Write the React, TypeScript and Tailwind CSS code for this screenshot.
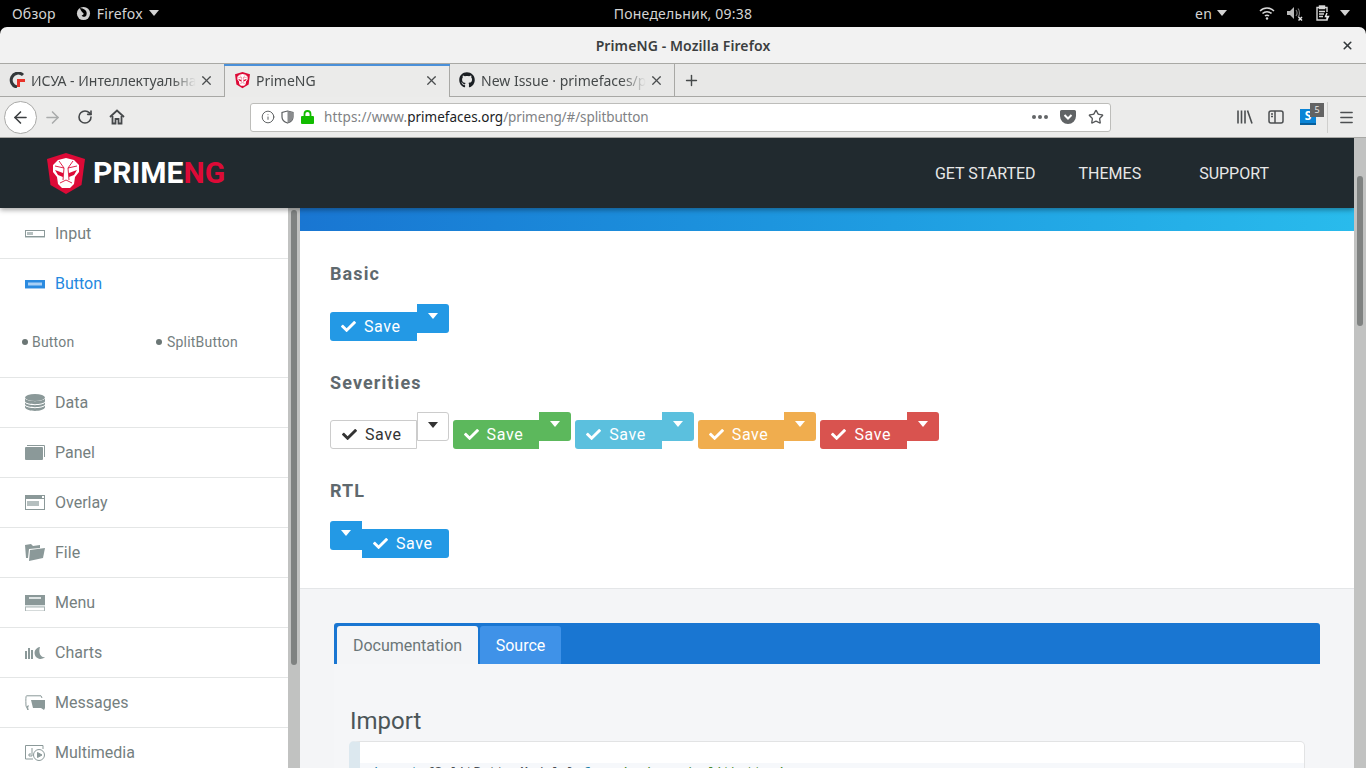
import React from "react"
import { ArrowLeft, ArrowRight, RotateCw, Info, Star, Menu, X, Plus } from "lucide-react"
import { FaCheck, FaGithub } from "react-icons/fa"

const uiFont = "font-['Noto_Sans',sans-serif]"

function Caret({ className }: { className: string }) {
  return (
    <svg width="10" height="6" viewBox="0 0 10 6" className={className}>
      <polygon points="0,0 10,0 5,6" fill="currentColor" />
    </svg>
  )
}

function PrimeShield({ size }: { size: number }) {
  return (
    <svg width={size} height={size * 41 / 38} viewBox="0 0 38 41">
      <polygon points="19,0 38,6 34.5,32 19,41 3.5,32 0,6" fill="#dd0a37" />
      <polygon points="11,7 19,5 27,7 32,12 32,19 28,24 27,31 23,35 15,35 11,31 10,24 6,19 6,12" fill="#fff" />
      <polygon points="8,17 16,20 16,24 11,22" fill="#dd0a37" />
      <polygon points="30,17 22,20 22,24 27,22" fill="#dd0a37" />
      <path d="M12 8 L17 15 L8 13 M26 8 L21 15 L30 13 M17 15 L16 27 M21 15 L22 27 M13 30 L19 27 L25 30" stroke="#dd0a37" strokeWidth="0.9" fill="none" />
    </svg>
  )
}

function TopBar() {
  return (
    <div className={`h-[27px] pb-[1px] flex items-center text-[14px] tracking-[0.2px] text-[#d4d4d4] ${uiFont}`}>
      <div className="flex-1 flex items-center pl-[12px]">
        <span>Обзор</span>
        <svg width="15" height="15" viewBox="0 0 16 16" className="ml-[20px]">
          <circle cx="8" cy="8" r="7" fill="#d0d0d0" />
          <path d="M4 2 C8 2 13 5 11 10 C10 12 7 12 6 10 C8 10 9 8 7 7 C6 6 5 4 4 2Z" fill="#000" />
        </svg>
        <span className="ml-[6px]">Firefox</span>
        <Caret className="ml-[6px] text-[#d4d4d4]" />
      </div>
      <span className="ml-[4px]">Понедельник, 09:38</span>
      <div className="flex-1 flex items-center justify-end pr-[16px]">
        <span>en</span>
        <Caret className="ml-[5px] text-[#d4d4d4]" />
        <svg width="16" height="14" viewBox="0 0 16 14" className="ml-[32px]" fill="none" stroke="#d8d8d8" strokeWidth="1.5">
          <path d="M1 5 C5 1 11 1 15 5" />
          <path d="M3.5 7.5 C6 5 10 5 12.5 7.5" />
          <path d="M6 10 C7 9 9 9 10 10" />
          <circle cx="8" cy="12.5" r="1.2" fill="#d8d8d8" stroke="none" />
        </svg>
        <svg width="16" height="15" viewBox="0 0 16 15" className="ml-[12px]">
          <polygon points="0,5 3,5 7,1 7,13 3,9 0,9" fill="#b8b8b8" />
          <path d="M9 4 C10.5 6 10.5 8 9 10 M11 2.5 C13 5 13 9 11 11" stroke="#777" strokeWidth="1.2" fill="none" />
          <path d="M11.5 11 L15 14.5 M15 11 L11.5 14.5" stroke="#e0e0e0" strokeWidth="1.5" />
        </svg>
        <svg width="15" height="16" viewBox="0 0 15 16" className="ml-[13px]" fill="none" stroke="#d8d8d8" strokeWidth="1.4">
          <path d="M3 2.5 H1 V15 H11 V12 M9 2.5 H11 V7" />
          <rect x="3.5" y="1" width="5" height="2.5" fill="#d8d8d8" />
          <path d="M3 6.5 H9 M3 9 H8 M3 11.5 H7" />
          <path d="M11 8 L9.5 11.5 H12.5 L11 14.5" stroke="#e8e8e8" />
        </svg>
        <Caret className="ml-[9px] text-[#d4d4d4]" />
      </div>
    </div>
  )
}

function TitleBar() {
  return (
    <div className={`h-[37px] bg-[#f2f2f2] rounded-t-[7px] border-b border-[#a9a9a5] flex items-center justify-center relative ${uiFont}`}>
      <span className="text-[14px] font-semibold tracking-[0.1px] text-[#3b3e3f]">PrimeNG - Mozilla Firefox</span>
      <X size={13} strokeWidth={3} className="absolute right-[12px] top-[12px] text-[#33393b]" />
    </div>
  )
}

function Tab({ icon, title, selected, width }: { icon: React.ReactNode; title: string; selected?: boolean; width: string }) {
  return (
    <div className={`${width} h-[33px] flex items-center pl-[9px] pr-[10px] border-r border-[#a8a8a5] relative ${selected ? "bg-[#ebebea]" : "border-b"}`}>
      {selected && <div className="absolute -left-px -right-px top-0 h-[2px] bg-[#4a90d9]" />}
      <div className="w-[16px] h-[16px] shrink-0 flex items-center justify-center">{icon}</div>
      <span className="ml-[6px] flex-1 overflow-hidden whitespace-nowrap text-[14px] text-[#45494a] [mask-image:linear-gradient(to_right,black_85%,transparent)]">{title}</span>
      <X size={15} strokeWidth={2} className="ml-[3px] shrink-0 text-[#4a4d4e]" />
    </div>
  )
}

function TabBar() {
  return (
    <div className={`h-[33px] bg-[#e8e8e7] flex items-start ${uiFont}`}>
      <Tab
        width="w-[225px]"
        title="ИСУА - Интеллектуальная"
        icon={
          <svg width="16" height="16" viewBox="0 0 16 16">
            <path d="M14 3 A7 7 0 1 0 8 15" stroke="#33383a" strokeWidth="3" fill="none" />
            <path d="M8 7 H16 V10 H11 V15 H8Z" fill="#e8332a" />
          </svg>
        }
      />
      <Tab width="w-[225px]" selected title="PrimeNG" icon={<PrimeShield size={15} />} />
      <Tab width="w-[225px]" title="New Issue · primefaces/primeng" icon={<FaGithub size={16} className="text-[#1b1f23]" />} />
      <div className="h-[24px] mt-[4px] border-l border-[#a8a8a5] -ml-px" />
      <div className="flex-1 h-[33px] border-b border-[#a8a8a5] pl-[8px] pt-[8px]">
        <Plus size={17} strokeWidth={2} className="text-[#45494a]" />
      </div>
    </div>
  )
}

function NavBar() {
  return (
    <div className={`h-[41px] bg-[#ececeb] border-b border-[#a8a8a5] flex items-center pl-[4px] ${uiFont}`}>
      <div className="w-[33px] h-[33px] rounded-full bg-white border border-[#a9a9a7] flex items-center justify-center">
        <ArrowLeft size={19} strokeWidth={2} className="text-[#3c3f41] -ml-[1px]" />
      </div>
      <ArrowRight size={19} strokeWidth={2} className="ml-[6px] text-[#a9abab]" />
      <RotateCw size={16} strokeWidth={2.4} className="ml-[15px] text-[#45484a]" />
      <svg width="16" height="16" viewBox="0 0 16 16" className="ml-[16px]" fill="none" stroke="#45484a" strokeWidth="1.8">
        <path d="M1 8 L8 1.5 L15 8" />
        <path d="M3.5 7 V14.5 H6.5 V10 H9.5 V14.5 H12.5 V7" />
      </svg>
      <div className="ml-[125px] w-[861px] h-[29px] bg-white border border-[#bdbdba] rounded-[3px] flex items-center pl-[10px] pr-[6px]">
        <Info size={14} strokeWidth={1.6} className="text-[#55585a]" />
        <svg width="13" height="14" viewBox="0 0 13 14" className="ml-[6px]">
          <path d="M6.5 1 L12 2.5 V7 C12 10 9.5 12 6.5 13 C3.5 12 1 10 1 7 V2.5Z" fill="none" stroke="#5c5f61" strokeWidth="1.2" />
          <path d="M6.5 1 L12 2.5 V7 C12 10 9.5 12 6.5 13Z" fill="#8a8c8e" />
        </svg>
        <svg width="13" height="14" viewBox="0 0 13 14" className="ml-[7px]">
          <path d="M3.5 6 V4 A3 3 0 0 1 9.5 4 V6" fill="none" stroke="#12bc00" strokeWidth="1.8" />
          <rect y="6" width="13" height="8" rx="1" fill="#12bc00" />
        </svg>
        <div className="ml-[10px] flex-1 text-[13.5px] whitespace-nowrap text-[#808285]">
          <span className="tracking-[0.15px]">https://www.</span>
          <span className="text-[#1c1d1f]">primefaces.org</span>
          <span className="tracking-[-0.1px]">/primeng/#/splitbutton</span>
        </div>
        <div className="flex gap-[2px]">
          <div className="w-[4px] h-[4px] rounded-full bg-[#636567]" />
          <div className="w-[4px] h-[4px] rounded-full bg-[#636567]" />
          <div className="w-[4px] h-[4px] rounded-full bg-[#636567]" />
        </div>
        <svg width="16" height="14" viewBox="0 0 16 14" className="ml-[12px]">
          <path d="M1.5 0 H14.5 A1.5 1.5 0 0 1 16 1.5 V6 A8 8 0 0 1 0 6 V1.5 A1.5 1.5 0 0 1 1.5 0Z" fill="#606365" />
          <path d="M4.5 5 L8 8.5 L11.5 5" stroke="#fff" strokeWidth="2" fill="none" />
        </svg>
        <Star size={16} strokeWidth={2} className="ml-[12px] text-[#555759]" />
      </div>
      <div className="flex-1 flex items-center pl-[126px]">
        <svg width="16" height="14" viewBox="0 0 16 14" stroke="#4c4f51" strokeWidth="1.6" fill="none">
          <path d="M1 0.5 V13.5 M4.5 0.5 V13.5 M8 0.5 V13.5 M10.5 0.5 L15 13.5" />
        </svg>
        <svg width="16" height="14" viewBox="0 0 16 14" className="ml-[15px]" stroke="#4c4f51" strokeWidth="1.5" fill="none">
          <rect x="1" y="1" width="14" height="12" rx="2" />
          <path d="M7 1 V13 M3 4 H5 M3 6.5 H5" />
        </svg>
        <div className="ml-[16px] relative w-[16px] h-[16px] bg-[#0a84d6] flex items-center justify-center border-b-2 border-[#075f9c]">
          <span className="text-white text-[12px] font-bold leading-none">S</span>
          <span className="absolute left-[10px] -top-[6px] w-[14px] h-[14px] bg-[#636363] text-[#e8e8e8] text-[9px] leading-[14px] text-center">5</span>
        </div>
        <div className="ml-[11px] h-[31px] border-l border-[#cfcfcd]" />
        <Menu size={17} strokeWidth={2} className="ml-[10px] text-[#4c4f51]" />
      </div>
    </div>
  )
}

const iconFill = "#8b9999"

const sideIcons: Record<string, React.ReactNode> = {
  Input: (
    <svg width="20" height="8" viewBox="0 0 20 8">
      <rect x="0.5" y="0.5" width="19" height="6" fill="#fff" stroke={iconFill} />
      <rect x="2" y="2" width="6" height="3" fill="#b5bfbf" />
      <rect y="7" width="20" height="1" fill="#c9d2d2" />
    </svg>
  ),
  Button: (
    <svg width="20" height="9" viewBox="0 0 20 9">
      <rect width="20" height="8" fill="#2b8be0" />
      <rect x="3" y="2.5" width="14" height="3" fill="#a9d0f5" />
      <rect y="8" width="20" height="1" fill="#9fc8ef" />
    </svg>
  ),
  Data: (
    <svg width="20" height="17" viewBox="0 0 20 17" fill={iconFill}>
      <ellipse cx="10" cy="3.5" rx="10" ry="3.5" />
      <path d="M0 4.5 C2 8 18 8 20 4.5 V7.5 C18 11 2 11 0 7.5Z" />
      <path d="M0 8.5 C2 12 18 12 20 8.5 V10.5 C18 14 2 14 0 10.5Z" />
      <path d="M0 11.5 C2 15 18 15 20 11.5 V13.5 C18 18 2 18 0 13.5Z" />
    </svg>
  ),
  Panel: (
    <svg width="20" height="15" viewBox="0 0 20 15">
      <path d="M2 0.5 H19.5 V12" fill="none" stroke={iconFill} />
      <rect y="2" width="18" height="13" rx="1" fill={iconFill} />
    </svg>
  ),
  Overlay: (
    <svg width="20" height="15" viewBox="0 0 20 15">
      <rect width="20" height="15" fill={iconFill} />
      <rect x="1" y="4" width="18" height="10" fill="#fff" />
      <rect x="2" y="6" width="12" height="5" fill="#b5bfbf" />
      <rect x="17" y="1" width="2" height="2" fill="#fff" />
    </svg>
  ),
  File: (
    <svg width="20" height="17" viewBox="0 0 20 17" fill={iconFill}>
      <path d="M0 1 L6 0 L8 2 L15 1 L15 4 L4 5 L3 14 L1 14Z" />
      <path d="M5 6 L20 4 L18 14 L4 17Z" />
    </svg>
  ),
  Menu: (
    <svg width="20" height="16" viewBox="0 0 20 16">
      <rect width="20" height="10" fill={iconFill} />
      <rect x="4" y="2" width="12" height="2" fill="#dfe5e5" />
      <rect y="10" width="20" height="2" fill="#dfe5e5" />
      <rect x="0.5" y="12" width="19" height="4" fill="#fff" stroke="#aab5b5" />
    </svg>
  ),
  Charts: (
    <svg width="20" height="12" viewBox="0 0 20 12" fill={iconFill}>
      <rect y="4" width="2" height="8" />
      <rect x="3" y="1" width="2" height="11" />
      <rect x="6" y="3" width="2" height="9" />
      <path d="M15 0 A6 6 0 1 0 20 10 C16 11 13 6 15 0Z" />
    </svg>
  ),
  Messages: (
    <svg width="21" height="16" viewBox="0 0 21 16">
      <path d="M4 11 H2.5 L3 15 L1 11 Q0.5 1 1.5 0.8 H16 L17 3" fill="none" stroke={iconFill} />
      <path d="M6 5 H20 V13 L19 15 L16 13 H8 Z" fill={iconFill} />
    </svg>
  ),
  Multimedia: (
    <svg width="20" height="16" viewBox="0 0 20 16" fill="none" stroke={iconFill}>
      <path d="M18 4 V0.5 H0.5 V14 H8" />
      <path d="M7 3 V11 H4 V9 H6" />
      <circle cx="14" cy="10" r="5.5" fill="#fff" />
      <polygon points="12.5,7.5 17,10 12.5,12.5" fill={iconFill} />
    </svg>
  ),
}

function SideRow({ name, active }: { name: string; active?: boolean }) {
  return (
    <div className={`h-[50px] pl-[25px] flex items-center ${active ? "" : "border-b border-[#e4e6e6]"}`}>
      <div className="w-[30px] flex items-center">{sideIcons[name]}</div>
      <span className={`text-[16px] ${active ? "text-[#2388e0]" : "text-[#75807f]"}`}>{name}</span>
    </div>
  )
}

function Sidebar() {
  return (
    <div className="w-[300px] flex shrink-0">
      <div className="w-[288px] pt-[1px] bg-white font-['Roboto',sans-serif]">
        <SideRow name="Input" />
        <SideRow name="Button" active />
        <div className="h-[69px] border-b border-[#e4e6e6] pl-[22px] pt-[24px] flex text-[14px] tracking-[0.2px] text-[#75807f]">
          <div className="w-[134px] flex items-center h-[18px]">
            <div className="w-[6px] h-[6px] rounded-full bg-[#6b7675] mr-[4px]" />
            Button
          </div>
          <div className="flex items-center h-[18px]">
            <div className="w-[6px] h-[6px] rounded-full bg-[#6b7675] mr-[5px]" />
            SplitButton
          </div>
        </div>
        {["Data", "Panel", "Overlay", "File", "Menu", "Charts", "Messages", "Multimedia"].map((n) => (
          <SideRow key={n} name={n} />
        ))}
      </div>
      <div className="w-[12px] bg-[#c1c2c1] pt-[2px] px-[3px]">
        <div className="h-[455px] bg-[#7f8281] rounded-[3px]" />
      </div>
    </div>
  )
}

function SplitButton({ tone, border, rtl }: { tone: string; border?: boolean; rtl?: boolean }) {
  const edge = border ? "border border-[#cccccc]" : ""
  const label = (
    <div className={`h-[29px] mt-[8px] w-[86.6px] flex items-center pl-[11px] text-[16px] tracking-[0.6px] ${tone} ${edge} ${rtl ? "rounded-r-[3px]" : "rounded-l-[3px]"}`}>
      <FaCheck size={15} />
      <span className="ml-[8px]">Save</span>
    </div>
  )
  const drop = (
    <div className={`h-[29px] w-[32px] flex justify-center pt-[9px] ${tone} ${edge} ${rtl ? "rounded-l-[3px]" : "rounded-r-[3px]"}`}>
      <Caret className="" />
    </div>
  )
  return (
    <div className="flex items-start">
      {rtl ? drop : label}
      {rtl ? label : drop}
    </div>
  )
}

function Demo() {
  return (
    <div className="bg-white pl-[30px] pt-[30px] pb-[30px] border-b border-[#e4e6e8]">
      <h3 className="h-[24px] leading-[26px] text-[18px] font-bold tracking-[1.1px] text-[#5f696e]">Basic</h3>
      <div className="mt-[19px] flex">
        <SplitButton tone="bg-[#2399e5] text-white" />
      </div>
      <h3 className="mt-[29px] h-[24px] leading-[26px] text-[18px] font-bold tracking-[1.1px] text-[#5f696e]">Severities</h3>
      <div className="mt-[18px] flex gap-[4px]">
        <SplitButton tone="bg-white text-[#333333]" border />
        <SplitButton tone="bg-[#5cb85c] text-white" />
        <SplitButton tone="bg-[#5bc0de] text-white" />
        <SplitButton tone="bg-[#f0ad4e] text-white" />
        <SplitButton tone="bg-[#d9534f] text-white" />
      </div>
      <h3 className="mt-[29px] h-[24px] leading-[26px] text-[18px] font-bold tracking-[1.1px] text-[#5f696e]">RTL</h3>
      <div className="mt-[19px] flex">
        <SplitButton tone="bg-[#2399e5] text-white" rtl />
      </div>
    </div>
  )
}

function Docs() {
  return (
    <div className="flex-1 bg-[#f4f5f7] pt-[34px] px-[34px]">
      <div className="h-[41px] bg-[#1976d2] rounded-t-[3px] pl-[3px] pt-[3px] flex gap-[2px] text-[16px]">
        <div className="w-[141px] h-[38px] pt-[2px] bg-[#f4f5f7] rounded-t-[3px] flex items-center justify-center text-[#6b7678]">Documentation</div>
        <div className="w-[81px] h-[38px] pt-[2px] bg-[#3f92e8] rounded-t-[3px] flex items-center justify-center text-white">Source</div>
      </div>
      <div className="pl-[15px] pr-[15px] pt-[42px] bg-[#f5f6f8]">
        <h3 className="text-[24px] leading-[30px] pl-[1px] text-[#4b5558]">Import</h3>
        <div className="mt-[5px] h-[40px] border border-[#e2e3e4] border-l-[11px] border-l-[#dce8ef] rounded-t-[5px] bg-white pt-[21px]">
          <div className="h-[20px] bg-[#f6f8fb] pl-[12px] pt-[1px] text-[13px] leading-[18px] whitespace-pre font-['Liberation_Mono',monospace] text-[#4a4f55]">
            <span className="text-[#1a7fa8]">import</span> {"{SplitButtonModule}"} <span className="text-[#1a7fa8]">from</span> <span className="text-[#4a8a2a]">'primeng/splitbutton'</span>;
          </div>
        </div>
      </div>
    </div>
  )
}

function Site() {
  return (
    <div className="flex-1 flex flex-col min-w-0 overflow-hidden font-['Roboto',sans-serif]">
      <div className="h-[70px] shrink-0 bg-[#212a2f] flex items-center pl-[47px] relative z-10 shadow-[0_2px_5px_rgba(0,0,0,0.35)]">
        <PrimeShield size={38} />
        <div className="ml-[8px] text-[30px] font-bold leading-none text-white">
          PRIME<span className="text-[#dd0a37]">NG</span>
        </div>
        <div className="ml-auto pr-[85px] pt-[2px] flex text-[16px] text-[#e8e8e8]">
          <span>GET STARTED</span>
          <span className="ml-[43px]">THEMES</span>
          <span className="ml-[58px]">SUPPORT</span>
        </div>
      </div>
      <div className="flex-1 flex min-h-0">
        <Sidebar />
        <div className="flex-1 flex flex-col min-w-0">
          <div className="h-[23px] shrink-0 bg-gradient-to-r from-[#1976d2] to-[#29bbec]" />
          <Demo />
          <Docs />
        </div>
      </div>
    </div>
  )
}

export default function App() {
  return (
    <div className="w-[1366px] h-[768px] overflow-hidden bg-black flex flex-col">
      <TopBar />
      <TitleBar />
      <TabBar />
      <NavBar />
      <div className="flex-1 flex min-h-0">
        <Site />
        <div className="w-[12px] shrink-0 bg-[#c1c2c1] pt-[38px] px-[3px]">
          <div className="h-[150px] bg-[#7f8281] rounded-[3px]" />
        </div>
      </div>
    </div>
  )
}
